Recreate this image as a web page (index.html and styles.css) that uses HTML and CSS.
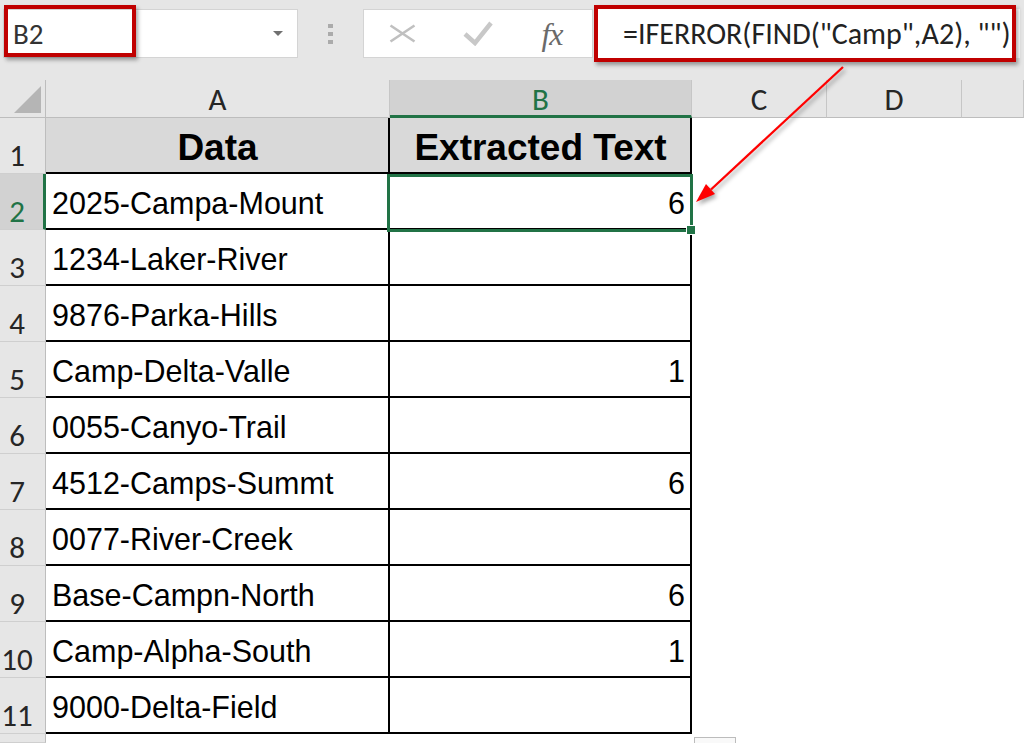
FILE: index.html
```html
<!DOCTYPE html>
<html lang="en">
<head>
<meta charset="utf-8">
<title>FIND Camp</title>
<link rel="stylesheet" href="styles.css">
</head>
<body>
<div class="app">
  <header class="toolbar">
    <div class="namebox">
      <span class="nb-text">B2</span>
      <span class="nb-arrow"></span>
      <div class="callout callout-name"></div>
    </div>
    <div class="grip"><i></i><i></i><i></i></div>
    <div class="fxbtns">
      <svg class="ic" width="27" height="19" viewBox="0 0 27 19"><path d="M1.5 1.5 L25.5 17.5 M25.5 1.5 L1.5 17.5" stroke="#c0c0c0" stroke-width="2.6" fill="none"/></svg>
      <svg class="ic" width="30" height="25" viewBox="0 0 30 25"><path d="M2 13 L12 22 L28 2" stroke="#c8c8c8" stroke-width="4.5" fill="none"/></svg>
      <span class="fx">fx</span>
    </div>
    <div class="formula">
      <span class="ftext">=IFERROR(FIND("Camp",A2), "")</span>
      <div class="callout callout-formula"></div>
    </div>
  </header>

  <main class="sheet">
    <div class="corner"><svg width="46" height="38" viewBox="0 0 46 38"><polygon points="41,6 41,33 14,33" fill="#b5b5b5"/></svg></div>
    <div class="ch">A</div>
    <div class="ch sel">B</div>
    <div class="ch">C</div>
    <div class="ch">D</div>
    <div class="ch"></div>

    <div class="rh">1</div>
    <div class="td th">Data</div>
    <div class="td th">Extracted Text</div>
    <div class="e"></div><div class="e"></div><div class="e"></div>

    <div class="rh sel">2</div>
    <div class="td">2025-Campa-Mount</div>
    <div class="td num cur">6</div>
    <div class="e"></div><div class="e"></div><div class="e"></div>

    <div class="rh">3</div>
    <div class="td">1234-Laker-River</div>
    <div class="td num"></div>
    <div class="e"></div><div class="e"></div><div class="e"></div>

    <div class="rh">4</div>
    <div class="td">9876-Parka-Hills</div>
    <div class="td num"></div>
    <div class="e"></div><div class="e"></div><div class="e"></div>

    <div class="rh">5</div>
    <div class="td">Camp-Delta-Valle</div>
    <div class="td num">1</div>
    <div class="e"></div><div class="e"></div><div class="e"></div>

    <div class="rh">6</div>
    <div class="td">0055-Canyo-Trail</div>
    <div class="td num"></div>
    <div class="e"></div><div class="e"></div><div class="e"></div>

    <div class="rh">7</div>
    <div class="td">4512-Camps-Summt</div>
    <div class="td num">6</div>
    <div class="e"></div><div class="e"></div><div class="e"></div>

    <div class="rh">8</div>
    <div class="td">0077-River-Creek</div>
    <div class="td num"></div>
    <div class="e"></div><div class="e"></div><div class="e"></div>

    <div class="rh">9</div>
    <div class="td">Base-Campn-North</div>
    <div class="td num">6</div>
    <div class="e"></div><div class="e"></div><div class="e"></div>

    <div class="rh">10</div>
    <div class="td">Camp-Alpha-South</div>
    <div class="td num">1</div>
    <div class="e"></div><div class="e"></div><div class="e"></div>

    <div class="rh">11</div>
    <div class="td">9000-Delta-Field</div>
    <div class="td num"></div>
    <div class="e"></div><div class="e"></div><div class="e"></div>

    <div class="rh"></div>
    <div class="e"></div><div class="e"></div>
    <div class="e"></div><div class="e"></div><div class="e"></div>
  </main>

  <svg class="arrow" width="1024" height="743" viewBox="0 0 1024 743">
    <line x1="843" y1="67" x2="711" y2="189.5" stroke="#ff0000" stroke-width="2.3"/>
    <polygon points="696,202 715,194 706,184" fill="#ff0000"/>
  </svg>
  <div class="qa"></div>
</div>
</body>
</html>
```

FILE: styles.css
```css
html, body {
  margin: 0;
  padding: 0;
  background: #ffffff;
}

body {
  font-family: Carlito, "Open Sans", "DejaVu Sans", sans-serif;
}

.app {
  position: relative;
  width: 1024px;
  height: 743px;
  overflow: hidden;
  background: #ffffff;
}

/* ---------- toolbar / formula bar ---------- */
.toolbar {
  display: flex;
  align-items: flex-start;
  height: 80px;
  padding-top: 9px;
  box-sizing: border-box;
  background: #e6e6e6;
}

.namebox {
  position: relative;
  margin-left: 3px;
  width: 295px;
  height: 49px;
  box-sizing: border-box;
  border: 1px solid #d4d4d4;
  background: #ffffff;
  display: flex;
  align-items: center;
  justify-content: space-between;
  padding: 0 14px 0 9px;
  font-size: 29px;
  color: #333333;
}

.nb-arrow {
  width: 0;
  height: 0;
  border-left: 5px solid transparent;
  border-right: 5px solid transparent;
  border-top: 5px solid #707070;
}

.grip {
  width: 65px;
  height: 49px;
  display: flex;
  flex-direction: column;
  align-items: center;
  justify-content: center;
  gap: 4px;
}

.grip i {
  display: block;
  width: 5px;
  height: 4px;
  background: #ababab;
}

.fxbtns {
  width: 230px;
  height: 49px;
  box-sizing: border-box;
  border: 1px solid #d4d4d4;
  background: #ffffff;
  display: grid;
  grid-template-columns: repeat(3, 1fr);
  align-items: center;
  justify-items: center;
}

.ic {
  display: block;
}

.fx {
  font-family: "Liberation Serif", "DejaVu Serif", serif;
  font-style: italic;
  font-size: 32px;
  line-height: 1;
  color: #6a6a6a;
  letter-spacing: -1px;
  margin-left: -4px;
}

.formula {
  position: relative;
  flex: 1;
  margin-left: 4px;
  margin-right: 4px;
  height: 49px;
  background: #ffffff;
  display: flex;
  align-items: center;
  padding-left: 26px;
  font-size: 30px;
  color: #222222;
  white-space: nowrap;
}

.callout {
  position: absolute;
  box-sizing: border-box;
  border: 4px solid #c00000;
  box-shadow: 2px 3px 4px rgba(0, 0, 0, 0.35);
  pointer-events: none;
}

.callout-name {
  left: 0;
  top: -5px;
  width: 132px;
  height: 52px;
}

.callout-formula {
  left: -3px;
  top: -4px;
  width: 422px;
  height: 57px;
}

/* ---------- sheet ---------- */
.sheet {
  display: grid;
  grid-template-columns: 46px 344px 302px 135px 135px 1fr;
  grid-template-rows: 38px repeat(11, 56px) 1fr;
  height: 663px;
}

.corner {
  background: #e6e6e6;
  border-right: 1px solid #bdbdbd;
  border-bottom: 1px solid #bdbdbd;
  overflow: hidden;
}

.corner svg {
  display: block;
}

.ch {
  box-sizing: border-box;
  background: #e6e6e6;
  border-right: 1px solid #c6c6c6;
  border-bottom: 1px solid #bdbdbd;
  display: flex;
  align-items: center;
  justify-content: center;
  padding-top: 2px;
  font-size: 31px;
  color: #262626;
  line-height: 1;
}

.ch.sel {
  background: #d2d2d2;
  color: #217346;
  border-bottom: 3px solid #217346;
  padding-top: 4px;
}

.rh {
  box-sizing: border-box;
  background: #e6e6e6;
  border-right: 1px solid #bdbdbd;
  border-bottom: 1px solid #cfcfcf;
  display: flex;
  align-items: flex-end;
  justify-content: center;
  padding: 0 11px 2px 0;
  font-size: 31px;
  line-height: 1;
  color: #262626;
}

.rh.sel {
  background: #d2d2d2;
  color: #217346;
  border-right: 3px solid #217346;
  padding-right: 9px;
}

.td {
  box-sizing: border-box;
  border-right: 2px solid #000000;
  border-bottom: 2px solid #000000;
  display: flex;
  align-items: center;
  padding: 5px 5px 0 6px;
  font-family: "Liberation Sans", Arial, sans-serif;
  font-size: 30.5px;
  color: #000000;
  white-space: nowrap;
  background: #ffffff;
}

.th {
  background: #d9d9d9;
  font-weight: bold;
  font-size: 37px;
  justify-content: center;
}

.num {
  justify-content: flex-end;
}

.cur {
  position: relative;
}

.cur::before {
  content: "";
  position: absolute;
  left: -3px;
  top: 0;
  right: -3px;
  bottom: -4px;
  border: 3px solid #217346;
}

.cur::after {
  content: "";
  position: absolute;
  left: 297px;
  top: 52px;
  width: 8px;
  height: 8px;
  background: #217346;
  box-shadow: 0 0 0 1px #ffffff;
  z-index: 2;
}

.e {
  background: #ffffff;
}

/* ---------- annotations ---------- */
.arrow {
  position: absolute;
  left: 0;
  top: 0;
  pointer-events: none;
  filter: drop-shadow(2px 3px 2px rgba(0, 0, 0, 0.35));
}

.qa {
  position: absolute;
  left: 694px;
  top: 737px;
  width: 42px;
  height: 14px;
  box-sizing: border-box;
  border: 1px solid #bcbcbc;
  background: #f9f9f9;
}
```
